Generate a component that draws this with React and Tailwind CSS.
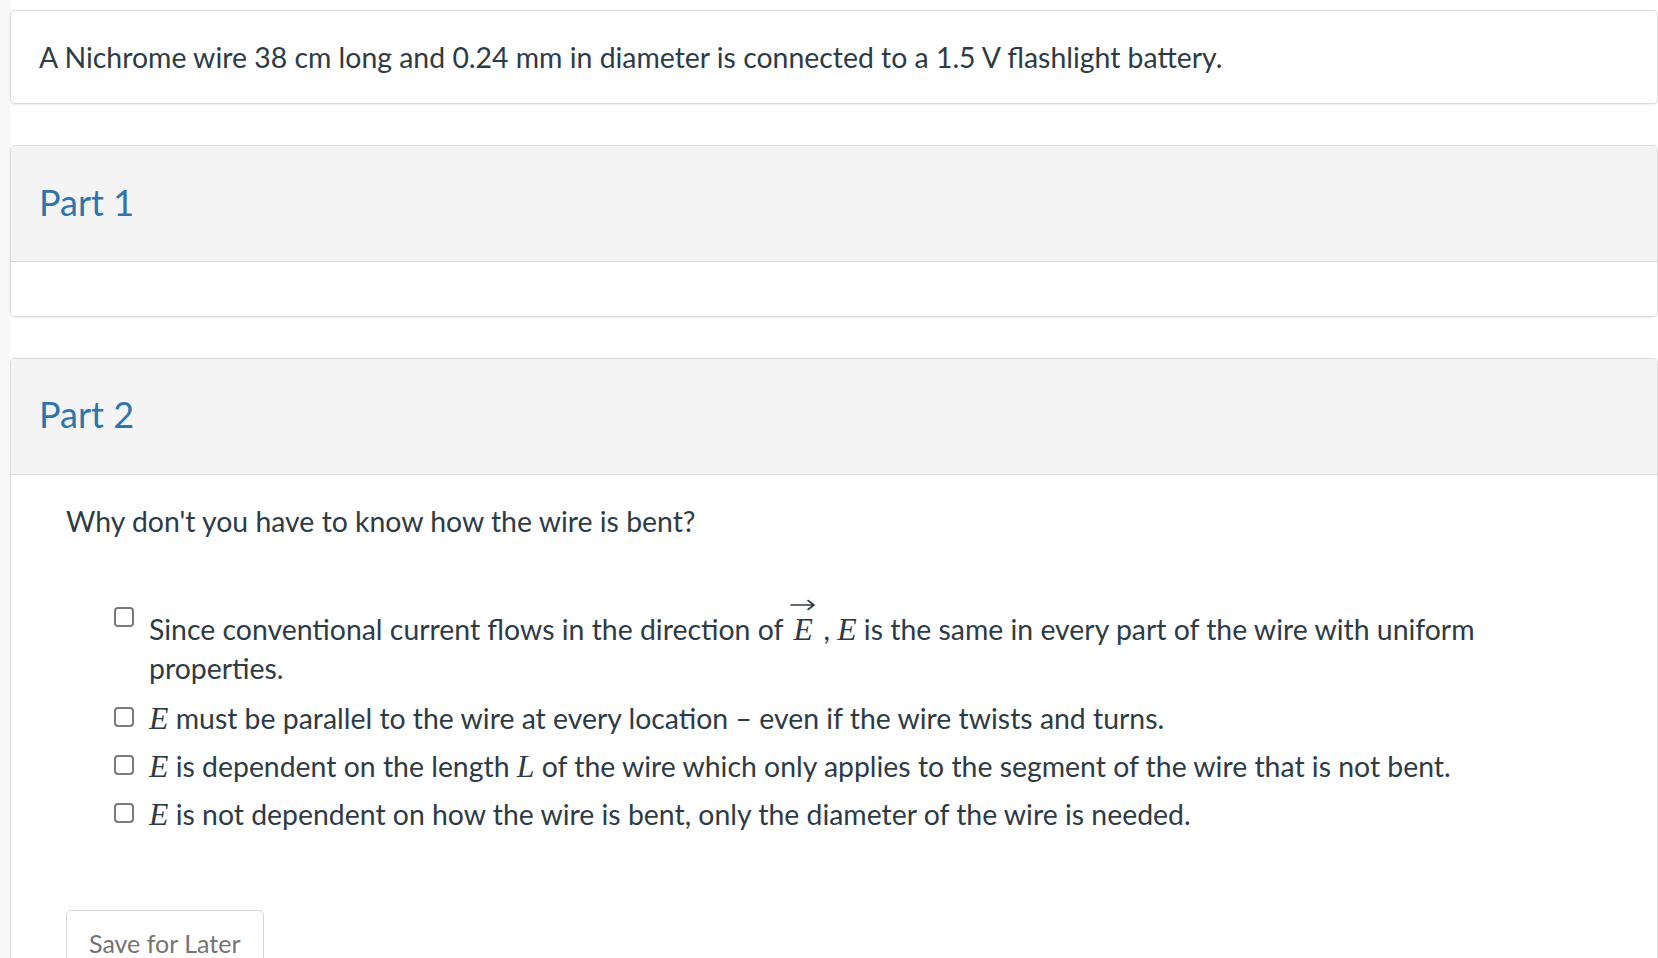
import React from 'react';

const font = { fontFamily: 'Lato, "Noto Sans", sans-serif' };

function Box() {
  return (
    <span className="mt-[8px] mr-[15px] h-[20px] w-[20px] shrink-0 rounded-[4px] border-2 border-[#7a7a7a] bg-white" />
  );
}

function Var({ children }) {
  return <span className="font-['Liberation_Serif',serif] text-[1.12em] leading-none italic">{children}</span>;
}

function VecE() {
  return (
    <span className="inline-block text-center align-baseline leading-none">
      <svg className="mx-auto mb-[3px] block" width="26" height="12" viewBox="0 0 26 12" fill="none" stroke="#2d3b45" strokeWidth="1.6">
        <path d="M1 6h23M18 1.5l6 4.5-6 4.5" strokeLinecap="round" strokeLinejoin="round" />
      </svg>
      <Var>E</Var>
    </span>
  );
}

function Option({ children, className = '' }) {
  return (
    <div className={`flex items-start ${className}`}>
      <Box />
      <div className="leading-[39px]">{children}</div>
    </div>
  );
}

export default function App() {
  return (
    <div className="flex min-h-[958px] bg-white text-[#2d3b45]" style={font}>
      <div className="w-[10px] shrink-0 bg-[#f8f8f8]" />
      <div className="flex-1 pt-[10px]">
        {/* intro */}
        <div className="flex h-[94px] items-center rounded-[5px] border border-[#dcdcdc] bg-white px-[28px] text-[28.4px] shadow-[0_1px_2px_rgba(0,0,0,0.08)]">
          A Nichrome wire 38 cm long and 0.24 mm in diameter is connected to a 1.5 V flashlight battery.
        </div>

        {/* Part 1 */}
        <div className="mt-[41px] overflow-hidden rounded-[5px] border border-[#dcdcdc] shadow-[0_1px_2px_rgba(0,0,0,0.08)]">
          <div className="flex h-[116px] items-center border-b border-[#dcdcdc] bg-[#f4f4f4] px-[28px] pb-[4px] text-[36px] text-[#2f74aa]">
            Part 1
          </div>
          <div className="h-[54px] bg-white" />
        </div>

        {/* Part 2 */}
        <div className="mt-[41px] rounded-t-[5px] border border-b-0 border-[#dcdcdc]">
          <div className="flex h-[116px] items-center rounded-t-[5px] border-b border-[#dcdcdc] bg-[#f4f4f4] px-[28px] pb-[5px] text-[36px] text-[#2f74aa]">
            Part 2
          </div>
          <div className="px-[55px] pt-[27px] pb-[40px] text-[28.4px]">
            <p className="leading-[39px]">Why don't you have to know how the wire is bent?</p>

            <div className="mt-[58px] flex flex-col gap-[9px] pl-[48px]">
              <Option className="mb-[2px]">
                Since conventional current flows in the direction of <VecE /> , <Var>E</Var> is the same in every part of the wire with uniform
                <br />
                properties.
              </Option>
              <Option>
                <Var>E</Var> must be parallel to the wire at every location – even if the wire twists and turns.
              </Option>
              <Option>
                <Var>E</Var> is dependent on the length <Var>L</Var> of the wire which only applies to the segment of the wire that is not bent.
              </Option>
              <Option>
                <Var>E</Var> is not dependent on how the wire is bent, only the diameter of the wire is needed.
              </Option>
            </div>

            <button className="mt-[76px] rounded-[5px] border border-[#d6d6d6] bg-white px-[22px] py-[14px] text-[25px] text-[#737373]">
              Save for Later
            </button>
          </div>
        </div>
      </div>
    </div>
  );
}
